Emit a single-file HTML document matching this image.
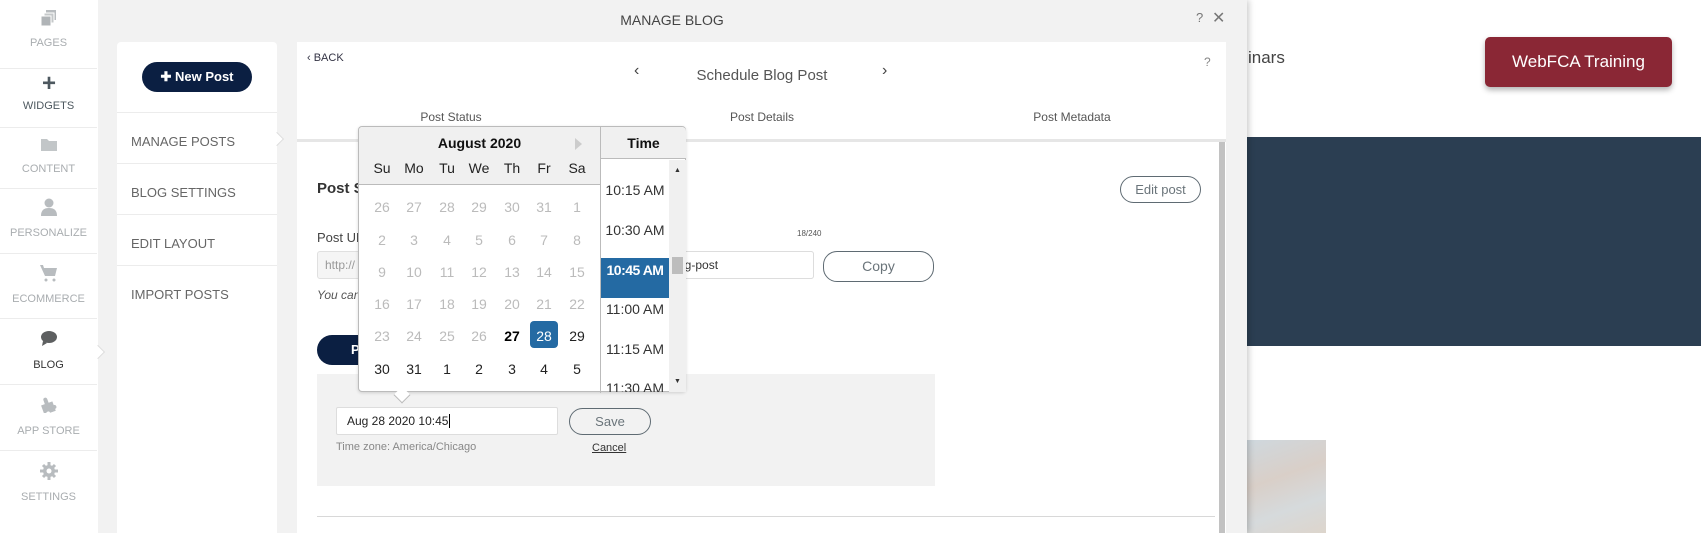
<!DOCTYPE html>
<html><head><meta charset="utf-8"><style>
*{box-sizing:border-box;margin:0;padding:0}
body{width:1701px;height:533px;overflow:hidden;position:relative;background:#fff;font-family:"Liberation Sans",sans-serif;color:#333}
.a{position:absolute}
.sb{left:0;top:0;width:98px;height:533px;background:#fff;z-index:3}
.si{position:absolute;left:0;width:97px;text-align:center;font-size:11px;color:#a9adb0}
.sd{position:absolute;left:0;width:97px;height:1px;background:#ececec}
.modal{left:98px;top:0;width:1149px;height:533px;background:#f2f2f2;box-shadow:2px 0 6px rgba(0,0,0,.2);z-index:2}
.lp{left:117px;top:42px;width:160px;height:491px;background:#fff;border-radius:4px 4px 0 0}
.mi{position:absolute;left:14px;font-size:13px;color:#666}
.ld{position:absolute;left:0;width:160px;height:1px;background:#ececec}
.mp{left:297px;top:42px;width:929px;height:491px;background:#fff}
.btn{border:1px solid #5f6b73;border-radius:14px;text-align:center;color:#6a747a;font-size:13px;background:#fff}
.dp{left:358px;top:126px;width:328px;height:266px;background:#fff;border:1px solid #bbb;border-radius:4px;z-index:5;box-shadow:0 1px 3px rgba(0,0,0,.15)}
.dn{position:absolute;width:30px;text-align:center;font-size:14px}
.tm{position:absolute;left:0;width:68px;text-align:center;font-size:14px;color:#333}
.ic{position:absolute}
</style></head><body>
<div class="a" style="left:1248px;top:48px;font-size:17px;color:#444">inars</div>
<div class="a" style="left:1485px;top:37px;width:187px;height:50px;background:#8a2735;border-radius:5px;box-shadow:0 3px 6px rgba(0,0,0,.3);color:#fff;font-size:17px;text-align:center;line-height:50px">WebFCA Training</div>
<div class="a" style="left:1247px;top:137px;width:454px;height:209px;background:#2b3e52"></div>
<div class="a" style="left:1247px;top:440px;width:79px;height:93px;background:linear-gradient(160deg,#cfd8de,#d9cfc8 40%,#d6dadc 70%,#ddd5cc)"></div>

<div class="a sb">
 <svg class="ic" style="left:40px;top:9px" width="18" height="18" viewBox="0 0 18 18"><rect x="6" y="1" width="10" height="10" fill="#b8bcbf"/><rect x="4" y="4" width="10" height="10" fill="#c5c8ca" stroke="#fff"/><rect x="1" y="7" width="10" height="10" fill="#b0b4b7" stroke="#fff"/></svg>
 <div class="si" style="top:37px">PAGES</div><div class="sd" style="top:68px"></div>
 <div class="a" style="left:38px;top:70px;font-size:24px;font-weight:bold;color:#4d585f;width:22px;text-align:center">+</div>
 <div class="si" style="top:100px;color:#4d585f">WIDGETS</div><div class="sd" style="top:127px"></div>
 <svg class="ic" style="left:41px;top:138px" width="16" height="13"><path d="M0 1h6l2 2h8v10H0z" fill="#c2c6c8"/></svg>
 <div class="si" style="top:163px">CONTENT</div><div class="sd" style="top:188px"></div>
 <svg class="ic" style="left:40px;top:198px" width="18" height="18"><circle cx="9" cy="5" r="4.5" fill="#b8bcbf"/><path d="M1 18c0-6 3-8 8-8s8 2 8 8z" fill="#b8bcbf"/></svg>
 <div class="si" style="top:227px">PERSONALIZE</div><div class="sd" style="top:253px"></div>
 <svg class="ic" style="left:40px;top:264px" width="18" height="18"><path d="M0 1h3l1 3h13l-2 8H5z" fill="#b8bcbf"/><circle cx="6" cy="16" r="1.5" fill="#b8bcbf"/><circle cx="14" cy="16" r="1.5" fill="#b8bcbf"/></svg>
 <div class="si" style="top:293px">ECOMMERCE</div><div class="sd" style="top:318px"></div>
 <svg class="ic" style="left:40px;top:330px" width="18" height="16"><ellipse cx="9" cy="7" rx="8" ry="6" fill="#5d5f60"/><path d="M3 11l-1 5 5-3z" fill="#5d5f60"/></svg>
 <div class="si" style="top:359px;color:#333">BLOG</div><div class="sd" style="top:384px"></div>
 <svg class="ic" style="left:39px;top:395px" width="18" height="18"><path d="M2 8h4V4a2 2 0 014 0v4h4v4a2 2 0 010 4v2H8a2 2 0 00-4 0H2z" fill="#b8bcbf" transform="rotate(-20 9 9)"/></svg>
 <div class="si" style="top:425px">APP STORE</div><div class="sd" style="top:450px"></div>
 <svg class="ic" style="left:40px;top:462px" width="18" height="18"><circle cx="9" cy="9" r="6" fill="#b8bcbf"/><g stroke="#b8bcbf" stroke-width="3"><path d="M9 0v18M0 9h18M3 3l12 12M15 3L3 15"/></g><circle cx="9" cy="9" r="2.5" fill="#fff"/></svg>
 <div class="si" style="top:491px">SETTINGS</div>
</div>
<div class="a" style="left:93px;top:347px;width:10px;height:10px;background:#fff;transform:rotate(45deg);z-index:3;border-right:1px solid #ddd;border-top:1px solid #ddd"></div>

<div class="a modal"></div>
<div class="a" style="z-index:4;left:0;top:0;width:1701px;height:533px">
 <div class="a" style="left:580px;top:12px;width:184px;text-align:center;font-size:14px;color:#444">MANAGE BLOG</div>
 <div class="a" style="left:1196px;top:10px;font-size:13px;color:#777">?</div>
 <div class="a" style="left:1212px;top:8px;font-size:16px;color:#777">✕</div>

 <div class="a lp">
  <div class="a" style="left:25px;top:20px;width:110px;height:30px;background:#0b1f42;border-radius:15px;color:#fff;font-size:13px;font-weight:bold;text-align:center;line-height:30px">✚ New Post</div>
  <div class="ld" style="top:70px"></div>
  <div class="mi" style="top:92px">MANAGE POSTS</div><div class="ld" style="top:121px"></div>
  <div class="mi" style="top:143px">BLOG SETTINGS</div><div class="ld" style="top:172px"></div>
  <div class="mi" style="top:194px">EDIT LAYOUT</div><div class="ld" style="top:223px"></div>
  <div class="mi" style="top:245px">IMPORT POSTS</div>
 </div>
 <div class="a" style="left:272px;top:134px;width:10px;height:10px;background:#fff;transform:rotate(45deg);border-right:1px solid #ddd;border-top:1px solid #ddd"></div>

 <div class="a mp">
  <div class="a" style="left:10px;top:10px;font-size:11px;color:#334">‹ BACK</div>
  <div class="a" style="left:337px;top:20px;font-size:16px;color:#444">‹</div>
  <div class="a" style="left:360px;top:25px;width:210px;text-align:center;font-size:15px;color:#555">Schedule Blog Post</div>
  <div class="a" style="left:585px;top:20px;font-size:16px;color:#444">›</div>
  <div class="a" style="left:907px;top:13px;font-size:12px;color:#888">?</div>
  <div class="a" style="left:104px;top:68px;width:100px;text-align:center;font-size:12px;color:#555">Post Status</div>
  <div class="a" style="left:415px;top:68px;width:100px;text-align:center;font-size:12px;color:#555">Post Details</div>
  <div class="a" style="left:720px;top:68px;width:110px;text-align:center;font-size:12px;color:#555">Post Metadata</div>
  <div class="a" style="left:0;top:97px;width:929px;height:3px;background:#e6e6e6"></div>
  <div class="a" style="left:922px;top:100px;width:6px;height:391px;background:#c2c2c2"></div>
  <div class="a" style="left:20px;top:138px;font-size:15px;font-weight:bold;color:#333">Post Status</div>
  <div class="a btn" style="left:823px;top:134px;width:81px;height:27px;line-height:25px">Edit post</div>
  <div class="a" style="left:20px;top:188px;font-size:13px;color:#444">Post URL</div>
  <div class="a" style="left:500px;top:187px;font-size:8px;color:#555">18/240</div>
  <div class="a" style="left:20px;top:209px;width:497px;height:28px;background:#f5f5f5;border:1px solid #e0e0e0;border-radius:3px;font-size:12px;color:#999;padding:6px 7px">http://</div>
  <div class="a" style="left:380px;top:209px;width:137px;height:28px;background:#fff;border:1px solid #ddd;border-radius:3px;font-size:12px;color:#333;padding:6px 0 0 0">og-post</div>
  <div class="a btn" style="left:526px;top:209px;width:111px;height:31px;line-height:29px;font-size:14px">Copy</div>
  <div class="a" style="left:20px;top:246px;font-size:12px;font-style:italic;color:#555">You can</div>
  <div class="a" style="left:20px;top:293px;width:120px;height:30px;background:#0b1f42;border-radius:15px;color:#fff;font-size:13px;font-weight:bold;line-height:30px;padding-left:34px">P</div>
  <div class="a" style="left:20px;top:332px;width:618px;height:112px;background:#f2f2f2"></div>
  <div class="a" style="left:39px;top:365px;width:222px;height:28px;background:#fff;border:1px solid #ddd;border-radius:2px;font-size:12px;color:#222;padding:6px 10px">Aug 28 2020 10:45<span style="border-left:1px solid #000;margin-left:1px"></span></div>
  <div class="a" style="left:39px;top:399px;font-size:11px;color:#888">Time zone: America/Chicago</div>
  <div class="a btn" style="left:272px;top:366px;width:82px;height:27px;line-height:25px;background:#f2f2f2">Save</div>
  <div class="a" style="left:295px;top:400px;font-size:11px;color:#333;text-decoration:underline">Cancel</div>
  <div class="a" style="left:20px;top:474px;width:898px;height:1px;background:#d8d8d8"></div>
 </div>

 <div class="a dp">
  <div class="a" style="left:0;top:0;width:241px;height:58px;background:#f0f0f0;border-bottom:1px solid #bbb;border-radius:4px 0 0 0"></div>
  <div class="a" style="left:0;top:8px;width:241px;text-align:center;font-size:14px;font-weight:bold;color:#111">August 2020</div>
  <div class="a" style="left:216px;top:0;width:0;height:0;border-top:6px solid transparent;border-bottom:6px solid transparent;border-left:7px solid #ccc;margin-top:11px"></div>
  <div class="a" style="left:241px;top:0;width:1px;height:266px;background:#bbb"></div>
  <div class="a" style="left:242px;top:0;width:85px;height:32px;background:#f0f0f0;border-bottom:1px solid #bbb;border-radius:0 4px 0 0;text-align:center;line-height:32px;font-size:14px;font-weight:bold;color:#111">Time</div>
  <div id="cal"></div>
  <div class="a" style="left:242px;top:33px;width:68px;height:232px;overflow:hidden">
   <div class="tm" style="top:22px">10:15 AM</div>
   <div class="tm" style="top:62px">10:30 AM</div>
   <div class="a" style="left:0;top:98px;width:68px;height:40px;background:#246aa3"></div>
   <div class="tm" style="top:102px;color:#fff;font-weight:bold;letter-spacing:-.5px">10:45 AM</div>
   <div class="tm" style="top:141px">11:00 AM</div>
   <div class="tm" style="top:181px">11:15 AM</div>
   <div class="tm" style="top:220px">11:30 AM</div>
  </div>
  <div class="a" style="left:310px;top:33px;width:17px;height:232px;background:#f0f0f0"></div>
  <div class="a" style="left:315px;top:40px;font-size:7px;color:#333">▲</div>
  <div class="a" style="left:315px;top:251px;font-size:7px;color:#333">▼</div>
  <div class="a" style="left:313px;top:130px;width:11px;height:17px;background:#bdbdbd"></div>
 </div>
 <div class="a" style="left:396px;top:389px;width:12px;height:12px;background:#fff;transform:rotate(45deg);border-right:1px solid #bbb;border-bottom:1px solid #bbb;z-index:6"></div>
</div>
<script>
var d=["Su","Mo","Tu","We","Th","Fr","Sa"],x=[8,40,73,105,138,170,203],h="";
for(var i=0;i<7;i++)h+='<div class="dn" style="left:'+x[i]+'px;top:33px;color:#222">'+d[i]+'</div>';
var rows=[[26,27,28,29,30,31,1],[2,3,4,5,6,7,8],[9,10,11,12,13,14,15],[16,17,18,19,20,21,22],[23,24,25,26,27,28,29],[30,31,1,2,3,4,5]];
var ys=[72,105,137,169,201,234];
for(var r=0;r<6;r++)for(var c=0;c<7;c++){var col="#bbb",st="";
if(r==4&&c>=4){col="#222";if(c==4)st="font-weight:bold;color:#000";}
if(r==5)col="#222";
if(r==4&&c==5){h+='<div class="a" style="left:'+(x[c]+1)+'px;top:'+(ys[r]-7)+'px;width:28px;height:27px;background:#246aa3;border-radius:4px"></div>';col="#fff";}
h+='<div class="dn" style="left:'+x[c]+'px;top:'+ys[r]+'px;color:'+col+';'+st+'">'+rows[r][c]+'</div>';}
document.getElementById("cal").innerHTML=h;
</script>
</body></html>
